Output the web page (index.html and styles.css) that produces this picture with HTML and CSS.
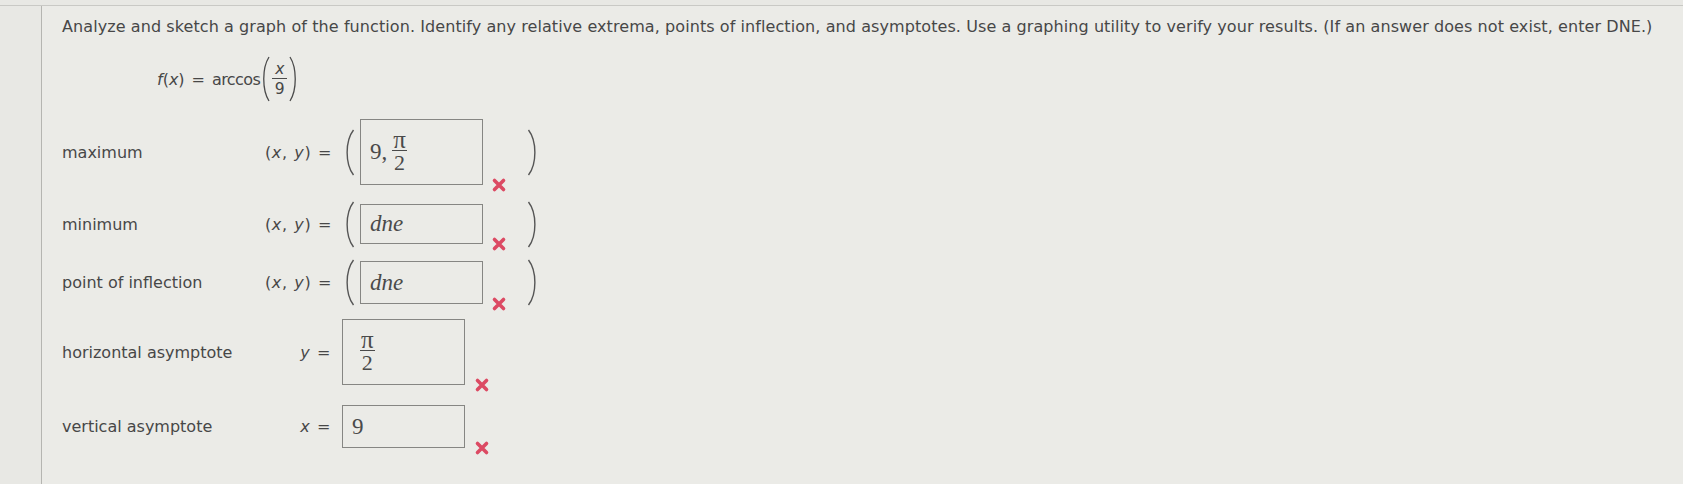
FILE: index.html
```html
<!DOCTYPE html>
<html>
<head>
<meta charset="utf-8">
<link rel="stylesheet" href="styles.css">
</head>
<body>
<div class="topbar"></div>
<div class="frame">
  <p class="prompt">Analyze and sketch a graph of the function. Identify any relative extrema, points of inflection, and asymptotes. Use a graphing utility to verify your results. (If an answer does not exist, enter DNE.)</p>

  <div class="func">
    <span class="it">f</span><span>(</span><span class="it">x</span><span>)</span><span class="eqsign">=</span><span class="fn">arccos</span>
    <svg class="fparen" viewBox="0 0 9 46" width="9" height="46"><path d="M8 1 C1 12 1 34 8 45" fill="none" stroke="#4b4b4b" stroke-width="1.3"/></svg>
    <span class="ffrac"><span class="fnum it">x</span><span class="fden">9</span></span>
    <svg class="fparen" viewBox="0 0 9 46" width="9" height="46"><path d="M1 1 C8 12 8 34 1 45" fill="none" stroke="#4b4b4b" stroke-width="1.3"/></svg>
  </div>

  <div class="rows">
    <div class="row">
      <div class="label">maximum</div>
      <div class="eq">(<span class="it">x</span>, <span class="it">y</span>) =</div>
      <div class="ans">
        <svg class="paren open" viewBox="0 0 12 47" width="12" height="47"><path d="M10.5 1 C2 12 2 35 10.5 46" fill="none" stroke="#555" stroke-width="1.4"/></svg>
        <div class="box tall"><span class="val">9,</span><span class="frac"><span class="num">π</span><span class="den">2</span></span></div>
        <svg class="xmark" viewBox="0 0 16 16" width="16" height="16"><path d="M3.5 3.5 L12.5 12.5 M12.5 3.5 L3.5 12.5" stroke="#dc4a63" stroke-width="3.6" stroke-linecap="round"/></svg>
        <svg class="paren close" viewBox="0 0 12 47" width="12" height="47"><path d="M1.5 1 C10 12 10 35 1.5 46" fill="none" stroke="#555" stroke-width="1.4"/></svg>
      </div>
    </div>

    <div class="row row-min">
      <div class="label">minimum</div>
      <div class="eq">(<span class="it">x</span>, <span class="it">y</span>) =</div>
      <div class="ans">
        <svg class="paren open" viewBox="0 0 12 47" width="12" height="47"><path d="M10.5 1 C2 12 2 35 10.5 46" fill="none" stroke="#555" stroke-width="1.4"/></svg>
        <div class="box short"><span class="val it">dne</span></div>
        <svg class="xmark" viewBox="0 0 16 16" width="16" height="16"><path d="M3.5 3.5 L12.5 12.5 M12.5 3.5 L3.5 12.5" stroke="#dc4a63" stroke-width="3.6" stroke-linecap="round"/></svg>
        <svg class="paren close" viewBox="0 0 12 47" width="12" height="47"><path d="M1.5 1 C10 12 10 35 1.5 46" fill="none" stroke="#555" stroke-width="1.4"/></svg>
      </div>
    </div>

    <div class="row row-inf">
      <div class="label">point of inflection</div>
      <div class="eq">(<span class="it">x</span>, <span class="it">y</span>) =</div>
      <div class="ans">
        <svg class="paren open" viewBox="0 0 12 47" width="12" height="47"><path d="M10.5 1 C2 12 2 35 10.5 46" fill="none" stroke="#555" stroke-width="1.4"/></svg>
        <div class="box mid"><span class="val it">dne</span></div>
        <svg class="xmark" viewBox="0 0 16 16" width="16" height="16"><path d="M3.5 3.5 L12.5 12.5 M12.5 3.5 L3.5 12.5" stroke="#dc4a63" stroke-width="3.6" stroke-linecap="round"/></svg>
        <svg class="paren close" viewBox="0 0 12 47" width="12" height="47"><path d="M1.5 1 C10 12 10 35 1.5 46" fill="none" stroke="#555" stroke-width="1.4"/></svg>
      </div>
    </div>

    <div class="row row-h">
      <div class="label">horizontal asymptote</div>
      <div class="eq"><span class="it">y</span> =</div>
      <div class="ans asym">
        <div class="box tall"><span class="frac solo"><span class="num">π</span><span class="den">2</span></span></div>
        <svg class="xmark" viewBox="0 0 16 16" width="16" height="16"><path d="M3.5 3.5 L12.5 12.5 M12.5 3.5 L3.5 12.5" stroke="#dc4a63" stroke-width="3.6" stroke-linecap="round"/></svg>
      </div>
    </div>

    <div class="row row-v">
      <div class="label">vertical asymptote</div>
      <div class="eq"><span class="it">x</span> =</div>
      <div class="ans asym">
        <div class="box mid"><span class="val">9</span></div>
        <svg class="xmark" viewBox="0 0 16 16" width="16" height="16"><path d="M3.5 3.5 L12.5 12.5 M12.5 3.5 L3.5 12.5" stroke="#dc4a63" stroke-width="3.6" stroke-linecap="round"/></svg>
      </div>
    </div>
  </div>
</div>
</body>
</html>
```

FILE: styles.css
```css
html, body {
  margin: 0;
  padding: 0;
  background: #e8e8e4;
}
body {
  font-family: "DejaVu Sans", Verdana, sans-serif;
  font-size: 16px;
  color: #474747;
  height: 484px;
  overflow: hidden;
}
.topbar {
  height: 5px;
  border-bottom: 1px solid #c9c9c5;
}
.frame {
  margin-left: 41px;
  border-left: 1px solid #b5b5b1;
  height: 478px;
  padding-left: 20px;
  background: #ebebe7;
}
.prompt {
  margin: 0;
  padding-top: 11px;
  line-height: 20px;
  white-space: nowrap;
  letter-spacing: 0.08px;
}
.it { font-style: italic; }

.func {
  display: flex;
  align-items: center;
  margin-top: 18px;
  margin-left: 95px;
  height: 48px;
}
.eqsign { margin: 0 7px; }
.fn { letter-spacing: -0.6px; }
.fparen { margin: 0 1px; }
.ffrac {
  display: inline-flex;
  flex-direction: column;
  align-items: center;
  font-size: 15.5px;
  padding: 0 1px;
}
.fnum {
  line-height: 18px;
  padding: 0 3px;
  border-bottom: 1px solid #4b4b4b;
}
.fden { line-height: 20px; }

.rows {
  display: flex;
  flex-direction: column;
  margin-top: 16px;
}
.row {
  display: flex;
  align-items: center;
}
.row-min { margin-top: 19px; }
.row-inf { margin-top: 17px; }
.row-h { margin-top: 15px; }
.row-v { margin-top: 20px; }
.label {
  width: 203px;
}
.eq {
  width: 66px;
  text-align: right;
  white-space: nowrap;
  letter-spacing: 0.6px;
  word-spacing: 1px;
}
.ans {
  display: flex;
  align-items: center;
  margin-left: 12px;
}
.ans.asym { margin-left: 11px; }
.paren { margin: -4px 0; }
.paren.open { margin-right: 5px; }
.paren.close { margin-left: 20px; }
.box {
  box-sizing: border-box;
  width: 123px;
  height: 42px;
  border: 1px solid #868683;
  display: flex;
  align-items: center;
  padding-left: 9px;
  font-family: "Liberation Serif", "Times New Roman", serif;
  font-size: 23px;
  color: #4a4a4a;
}
.box.tall { height: 66px; }
.box.short { height: 40px; }
.box.mid { height: 43px; }
.val { line-height: 24px; }
.frac {
  display: inline-flex;
  flex-direction: column;
  align-items: center;
  margin-left: 5px;
  font-size: 22px;
}
.frac.solo { margin-left: 8px; }
.num {
  font-size: 25px;
  line-height: 17px;
  padding: 0 1px 2px;
  border-bottom: 1px solid #4a4a4a;
}
.den { line-height: 23px; }
.xmark {
  align-self: flex-end;
  margin-bottom: -8px;
  margin-left: 8px;
}
.asym .xmark { margin-left: 9px; }
```
